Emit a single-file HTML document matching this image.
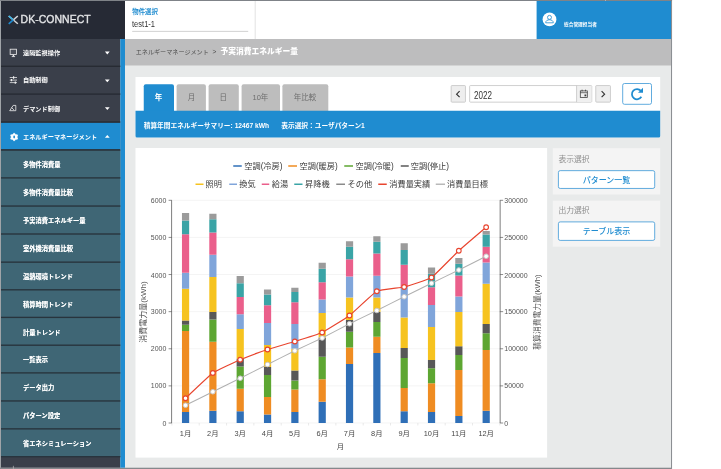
<!DOCTYPE html>
<html lang="ja"><head><meta charset="utf-8"><title>DK-CONNECT</title>
<style>
*{box-sizing:border-box;margin:0;padding:0}
html,body{width:721px;height:469px;overflow:hidden;background:#fff}
body{font-family:"Liberation Sans", "Noto Sans CJK JP", sans-serif;position:relative}
#bg{position:absolute;left:0;top:0}
#app{position:absolute;left:0;top:0;width:721px;height:469px;will-change:transform}
.t{position:absolute;display:block;white-space:nowrap;font-weight:normal}
</style></head><body>
<svg id="bg" width="721" height="469" viewBox="0 0 721 469">
<rect x="0.00" y="0.00" width="672.05" height="469.00" fill="#8c8f93" />
<rect x="0.00" y="0.00" width="672.05" height="1.05" fill="#7f8388" />
<rect x="0.00" y="1.00" width="1.10" height="468.00" fill="#a0a4a8" />
<rect x="0.00" y="467.70" width="671.20" height="1.30" fill="#85888c" />
<rect x="605.30" y="0.00" width="0.60" height="0.90" fill="#d8d8d8" />
<rect x="1.00" y="1.00" width="670.00" height="466.70" fill="#e8eaea" />
<rect x="1.00" y="1.00" width="124.00" height="38.00" fill="#262a35" />
<rect x="1.00" y="39.00" width="119.30" height="428.70" fill="#3a3f4a" />
<rect x="120.30" y="39.00" width="4.70" height="428.70" fill="#1f8cd0" />
<rect x="1.00" y="122.60" width="119.30" height="26.78" fill="#1f8cd0" />
<rect x="1.00" y="149.98" width="119.30" height="306.72" fill="#3f6675" />
<rect x="1.00" y="65.62" width="119.30" height="1.36" fill="#272b33" />
<rect x="1.00" y="93.42" width="119.30" height="1.36" fill="#272b33" />
<rect x="1.00" y="121.32" width="119.30" height="1.36" fill="#272b33" />
<rect x="1.00" y="149.30" width="119.30" height="1.36" fill="#272b33" />
<rect x="1.00" y="177.22" width="119.30" height="1.36" fill="#28343d" />
<rect x="1.00" y="205.37" width="119.30" height="1.36" fill="#28343d" />
<rect x="1.00" y="233.32" width="119.30" height="1.36" fill="#28343d" />
<rect x="1.00" y="261.47" width="119.30" height="1.36" fill="#28343d" />
<rect x="1.00" y="289.12" width="119.30" height="1.36" fill="#28343d" />
<rect x="1.00" y="316.72" width="119.30" height="1.36" fill="#28343d" />
<rect x="1.00" y="344.52" width="119.30" height="1.36" fill="#28343d" />
<rect x="1.00" y="372.22" width="119.30" height="1.36" fill="#28343d" />
<rect x="1.00" y="400.27" width="119.30" height="1.36" fill="#28343d" />
<rect x="1.00" y="428.17" width="119.30" height="1.36" fill="#28343d" />
<rect x="1.00" y="456.02" width="119.30" height="1.36" fill="#28343d" />
<path d="M104.90 51.60H109.70L107.30 54.40Z" fill="#fff"/>
<path d="M104.90 79.40H109.70L107.30 82.20Z" fill="#fff"/>
<path d="M104.90 107.25H109.70L107.30 110.05Z" fill="#fff"/>
<path d="M104.90 137.69H109.70L107.30 134.89Z" fill="#fff"/>
<rect x="10.15" y="49.2" width="6.45" height="5.3" fill="#4a4e58" stroke="#f0f0f0" stroke-width="0.8"/><path d="M13.4 54.6L12 56.6H14.8Z" fill="#f0f0f0"/><path d="M11.7 56.6H15.1" stroke="#f0f0f0" stroke-width="0.7"/>
<path d="M9.75 77.5H17M9.75 80.1H17M9.75 82.6H17" stroke="#f0f0f0" stroke-width="0.75"/><path d="M13.6 76.3V78.7M11.5 78.9V81.3M15.3 81.4V83.8" stroke="#f0f0f0" stroke-width="1.2"/>
<path d="M9.7 110.7L13.2 105.4H15.8V110.7Z" fill="none" stroke="#f0f0f0" stroke-width="0.8"/><path d="M11.6 107.6L13.9 109.9" stroke="#f0f0f0" stroke-width="0.8"/>
<g transform="translate(14.15 137.0)"><polygon points="0.00,-4.10 -1.45,-2.51 -3.55,-2.05 -2.90,-0.00 -3.55,2.05 -1.45,2.51 -0.00,4.10 1.45,2.51 3.55,2.05 2.90,0.00 3.55,-2.05 1.45,-2.51" fill="#fff" stroke="#fff" stroke-width="0.6" stroke-linejoin="round"/><ellipse rx="0.9" ry="1.4" fill="#1e8ad0"/></g>
<g transform="translate(9.8 465.8)"><path d="M3.6 0V3" stroke="#c8c8c8" stroke-width="0.6"/></g>
<g transform="translate(8.2 15.4)"><path d="M0.5 0.6L9.6 8.4" stroke="#d4d6d9" stroke-width="1.5"/><path d="M9.6 0.6L5.4 4.2" stroke="#d4d6d9" stroke-width="1.5"/><path d="M0.5 0.6L4.7 4.2" stroke="#39b6ea" stroke-width="1.6"/><path d="M0.5 8.4L5.1 4.5" stroke="#1e8ad0" stroke-width="1.6"/></g>
<rect x="125.00" y="1.00" width="546.00" height="38.00" fill="#fff" />
<line x1="255.20" y1="1.00" x2="255.20" y2="39.00" stroke="#dcdcdc" stroke-width="0.8" />
<rect x="536.60" y="1.00" width="134.40" height="38.00" fill="#1f8cd0" />
<rect x="132.20" y="30.90" width="116.00" height="0.80" fill="#c6c6c6" />
<g transform="translate(542.6 12.5)"><circle cx="6.9" cy="6.9" r="6.9" fill="#fff"/><circle cx="6.9" cy="4.9" r="2" fill="none" stroke="#1f8cd0" stroke-width="0.8"/><path d="M3.1 10.3C3.1 8.1 4.9 7.3 6.9 7.3C8.9 7.3 10.7 8.1 10.7 10.3Z" fill="none" stroke="#1f8cd0" stroke-width="0.8"/></g>
<rect x="125.00" y="39.00" width="546.00" height="26.50" fill="#bdbdbe" />
<path d="M135.5 77H660.2V136.1a1.5 1.5 0 0 1 -1.5 1.5H137a1.5 1.5 0 0 1 -1.5 -1.5Z" fill="#fff"/>
<path d="M143.75 110.9V86.3a2 2 0 0 1 2 -2H172a2 2 0 0 1 2 2V110.9Z" fill="#1f8cd0"/>
<path d="M176.6 110.9V86.3a2 2 0 0 1 2 -2H203.9a2 2 0 0 1 2 2V110.9Z" fill="#bdbdbd"/>
<path d="M208.6 110.9V86.3a2 2 0 0 1 2 -2H236.8a2 2 0 0 1 2 2V110.9Z" fill="#bdbdbd"/>
<path d="M241.6 110.9V86.3a2 2 0 0 1 2 -2H278a2 2 0 0 1 2 2V110.9Z" fill="#bdbdbd"/>
<path d="M282.4 110.9V86.3a2 2 0 0 1 2 -2H326.3a2 2 0 0 1 2 2V110.9Z" fill="#bdbdbd"/>
<path d="M135.5 110.8H660.2V136.1a1.5 1.5 0 0 1 -1.5 1.5H137a1.5 1.5 0 0 1 -1.5 -1.5Z" fill="#1f8cd0"/>
<rect x="451.15000000000003" y="85.55" width="14.30" height="16.6" rx="0.8" fill="#eee" stroke="#c0c0c0" stroke-width="0.75"/>
<path d="M459.6 91.2L456.6 94.2L459.6 97.2" fill="none" stroke="#333" stroke-width="1.15"/>
<rect x="469.65000000000003" y="85.55" width="122.10" height="16.6" rx="0.8" fill="#fff" stroke="#c0c0c0" stroke-width="0.75"/>
<path d="M576.6 85.9H591.4V101.8H576.6Z" fill="#f0f0f0"/>
<line x1="576.60" y1="85.60" x2="576.60" y2="102.10" stroke="#c0c0c0" stroke-width="0.75" />
<g transform="translate(579.6 89.4)"><rect x="0.7" y="1.5" width="7" height="6.6" fill="none" stroke="#3a3a3a" stroke-width="0.75"/><path d="M0.7 3.3H7.7" stroke="#3a3a3a" stroke-width="0.7"/><path d="M2.5 0.3V1.9M5.9 0.3V1.9" stroke="#3a3a3a" stroke-width="0.8"/><rect x="4.9" y="5.1" width="1.8" height="1.8" fill="#3a3a3a"/></g>
<rect x="595.75" y="85.55" width="14.70" height="16.6" rx="0.8" fill="#eee" stroke="#c0c0c0" stroke-width="0.75"/>
<path d="M601.6 91.2L604.6 94.2L601.6 97.2" fill="none" stroke="#333" stroke-width="1.15"/>
<rect x="622.7" y="83.5" width="28.8" height="20.8" rx="1.8" fill="#fff" stroke="#3a97d6" stroke-width="0.8"/>
<path d="M640.9 90.8A5.1 5.1 0 1 0 641.4 96.8" fill="none" stroke="#1f8cd0" stroke-width="1.75"/><path d="M643 87.7V92.7H638Z" fill="#1f8cd0"/>
<rect x="135.50" y="148.00" width="411.60" height="309.60" fill="#fff" />
<line x1="171.90" y1="423.00" x2="499.85" y2="423.00" stroke="#ececec" stroke-width="0.6" />
<line x1="171.90" y1="385.88" x2="499.85" y2="385.88" stroke="#ececec" stroke-width="0.6" />
<line x1="171.90" y1="348.77" x2="499.85" y2="348.77" stroke="#ececec" stroke-width="0.6" />
<line x1="171.90" y1="311.65" x2="499.85" y2="311.65" stroke="#ececec" stroke-width="0.6" />
<line x1="171.90" y1="274.53" x2="499.85" y2="274.53" stroke="#ececec" stroke-width="0.6" />
<line x1="171.90" y1="237.42" x2="499.85" y2="237.42" stroke="#ececec" stroke-width="0.6" />
<line x1="171.90" y1="200.30" x2="499.85" y2="200.30" stroke="#ececec" stroke-width="0.6" />
<line x1="171.90" y1="423.00" x2="171.90" y2="425.50" stroke="#dcdcdc" stroke-width="0.6" />
<line x1="199.23" y1="423.00" x2="199.23" y2="425.50" stroke="#dcdcdc" stroke-width="0.6" />
<line x1="226.56" y1="423.00" x2="226.56" y2="425.50" stroke="#dcdcdc" stroke-width="0.6" />
<line x1="253.89" y1="423.00" x2="253.89" y2="425.50" stroke="#dcdcdc" stroke-width="0.6" />
<line x1="281.22" y1="423.00" x2="281.22" y2="425.50" stroke="#dcdcdc" stroke-width="0.6" />
<line x1="308.55" y1="423.00" x2="308.55" y2="425.50" stroke="#dcdcdc" stroke-width="0.6" />
<line x1="335.88" y1="423.00" x2="335.88" y2="425.50" stroke="#dcdcdc" stroke-width="0.6" />
<line x1="363.20" y1="423.00" x2="363.20" y2="425.50" stroke="#dcdcdc" stroke-width="0.6" />
<line x1="390.53" y1="423.00" x2="390.53" y2="425.50" stroke="#dcdcdc" stroke-width="0.6" />
<line x1="417.86" y1="423.00" x2="417.86" y2="425.50" stroke="#dcdcdc" stroke-width="0.6" />
<line x1="445.19" y1="423.00" x2="445.19" y2="425.50" stroke="#dcdcdc" stroke-width="0.6" />
<line x1="472.52" y1="423.00" x2="472.52" y2="425.50" stroke="#dcdcdc" stroke-width="0.6" />
<line x1="499.85" y1="423.00" x2="499.85" y2="425.50" stroke="#dcdcdc" stroke-width="0.6" />
<rect x="181.96" y="412.00" width="7.20" height="11.00" fill="#2f6fb7" />
<rect x="181.96" y="331.00" width="7.20" height="81.00" fill="#ef8c22" />
<rect x="181.96" y="324.75" width="7.20" height="6.25" fill="#5da632" />
<rect x="181.96" y="320.50" width="7.20" height="4.25" fill="#585858" />
<rect x="181.96" y="288.75" width="7.20" height="31.75" fill="#f6c31f" />
<rect x="181.96" y="272.75" width="7.20" height="16.00" fill="#80a5da" />
<rect x="181.96" y="234.25" width="7.20" height="38.50" fill="#ea5f8b" />
<rect x="181.96" y="220.50" width="7.20" height="13.75" fill="#3aa4a6" />
<rect x="181.96" y="213.00" width="7.20" height="7.50" fill="#9b9b9b" />
<rect x="209.29" y="410.75" width="7.20" height="12.25" fill="#2f6fb7" />
<rect x="209.29" y="341.75" width="7.20" height="69.00" fill="#ef8c22" />
<rect x="209.29" y="319.50" width="7.20" height="22.25" fill="#5da632" />
<rect x="209.29" y="312.00" width="7.20" height="7.50" fill="#585858" />
<rect x="209.29" y="277.00" width="7.20" height="35.00" fill="#f6c31f" />
<rect x="209.29" y="254.75" width="7.20" height="22.25" fill="#80a5da" />
<rect x="209.29" y="232.50" width="7.20" height="22.25" fill="#ea5f8b" />
<rect x="209.29" y="219.25" width="7.20" height="13.25" fill="#3aa4a6" />
<rect x="209.29" y="213.75" width="7.20" height="5.50" fill="#9b9b9b" />
<rect x="236.62" y="411.25" width="7.20" height="11.75" fill="#2f6fb7" />
<rect x="236.62" y="388.75" width="7.20" height="22.50" fill="#ef8c22" />
<rect x="236.62" y="366.50" width="7.20" height="22.25" fill="#5da632" />
<rect x="236.62" y="358.75" width="7.20" height="7.75" fill="#585858" />
<rect x="236.62" y="329.00" width="7.20" height="29.75" fill="#f6c31f" />
<rect x="236.62" y="314.25" width="7.20" height="14.75" fill="#80a5da" />
<rect x="236.62" y="297.00" width="7.20" height="17.25" fill="#ea5f8b" />
<rect x="236.62" y="283.25" width="7.20" height="13.75" fill="#3aa4a6" />
<rect x="236.62" y="276.00" width="7.20" height="7.25" fill="#9b9b9b" />
<rect x="263.95" y="414.50" width="7.20" height="8.50" fill="#2f6fb7" />
<rect x="263.95" y="397.00" width="7.20" height="17.50" fill="#ef8c22" />
<rect x="263.95" y="375.00" width="7.20" height="22.00" fill="#5da632" />
<rect x="263.95" y="367.00" width="7.20" height="8.00" fill="#585858" />
<rect x="263.95" y="345.00" width="7.20" height="22.00" fill="#f6c31f" />
<rect x="263.95" y="323.00" width="7.20" height="22.00" fill="#80a5da" />
<rect x="263.95" y="305.25" width="7.20" height="17.75" fill="#ea5f8b" />
<rect x="263.95" y="294.50" width="7.20" height="10.75" fill="#3aa4a6" />
<rect x="263.95" y="289.50" width="7.20" height="5.00" fill="#9b9b9b" />
<rect x="291.28" y="412.00" width="7.20" height="11.00" fill="#2f6fb7" />
<rect x="291.28" y="389.50" width="7.20" height="22.50" fill="#ef8c22" />
<rect x="291.28" y="380.50" width="7.20" height="9.00" fill="#5da632" />
<rect x="291.28" y="370.50" width="7.20" height="10.00" fill="#585858" />
<rect x="291.28" y="348.75" width="7.20" height="21.75" fill="#f6c31f" />
<rect x="291.28" y="324.00" width="7.20" height="24.75" fill="#80a5da" />
<rect x="291.28" y="302.25" width="7.20" height="21.75" fill="#ea5f8b" />
<rect x="291.28" y="292.00" width="7.20" height="10.25" fill="#3aa4a6" />
<rect x="291.28" y="287.75" width="7.20" height="4.25" fill="#9b9b9b" />
<rect x="318.61" y="401.75" width="7.20" height="21.25" fill="#2f6fb7" />
<rect x="318.61" y="379.25" width="7.20" height="22.50" fill="#ef8c22" />
<rect x="318.61" y="356.75" width="7.20" height="22.50" fill="#5da632" />
<rect x="318.61" y="337.50" width="7.20" height="19.25" fill="#585858" />
<rect x="318.61" y="313.00" width="7.20" height="24.50" fill="#f6c31f" />
<rect x="318.61" y="299.50" width="7.20" height="13.50" fill="#80a5da" />
<rect x="318.61" y="282.25" width="7.20" height="17.25" fill="#ea5f8b" />
<rect x="318.61" y="268.75" width="7.20" height="13.50" fill="#3aa4a6" />
<rect x="318.61" y="262.75" width="7.20" height="6.00" fill="#9b9b9b" />
<rect x="345.94" y="364.00" width="7.20" height="59.00" fill="#2f6fb7" />
<rect x="345.94" y="347.50" width="7.20" height="16.50" fill="#ef8c22" />
<rect x="345.94" y="331.75" width="7.20" height="15.75" fill="#5da632" />
<rect x="345.94" y="320.00" width="7.20" height="11.75" fill="#585858" />
<rect x="345.94" y="297.50" width="7.20" height="22.50" fill="#f6c31f" />
<rect x="345.94" y="276.50" width="7.20" height="21.00" fill="#80a5da" />
<rect x="345.94" y="259.25" width="7.20" height="17.25" fill="#ea5f8b" />
<rect x="345.94" y="246.75" width="7.20" height="12.50" fill="#3aa4a6" />
<rect x="345.94" y="241.25" width="7.20" height="5.50" fill="#9b9b9b" />
<rect x="373.27" y="353.00" width="7.20" height="70.00" fill="#2f6fb7" />
<rect x="373.27" y="336.75" width="7.20" height="16.25" fill="#ef8c22" />
<rect x="373.27" y="322.00" width="7.20" height="14.75" fill="#5da632" />
<rect x="373.27" y="312.00" width="7.20" height="10.00" fill="#585858" />
<rect x="373.27" y="297.50" width="7.20" height="14.50" fill="#f6c31f" />
<rect x="373.27" y="275.75" width="7.20" height="21.75" fill="#80a5da" />
<rect x="373.27" y="253.50" width="7.20" height="22.25" fill="#ea5f8b" />
<rect x="373.27" y="241.75" width="7.20" height="11.75" fill="#3aa4a6" />
<rect x="373.27" y="236.25" width="7.20" height="5.50" fill="#9b9b9b" />
<rect x="400.60" y="411.25" width="7.20" height="11.75" fill="#2f6fb7" />
<rect x="400.60" y="388.00" width="7.20" height="23.25" fill="#ef8c22" />
<rect x="400.60" y="358.00" width="7.20" height="30.00" fill="#5da632" />
<rect x="400.60" y="348.00" width="7.20" height="10.00" fill="#585858" />
<rect x="400.60" y="317.50" width="7.20" height="30.50" fill="#f6c31f" />
<rect x="400.60" y="287.00" width="7.20" height="30.50" fill="#80a5da" />
<rect x="400.60" y="264.75" width="7.20" height="22.25" fill="#ea5f8b" />
<rect x="400.60" y="250.00" width="7.20" height="14.75" fill="#3aa4a6" />
<rect x="400.60" y="243.25" width="7.20" height="6.75" fill="#9b9b9b" />
<rect x="427.93" y="412.00" width="7.20" height="11.00" fill="#2f6fb7" />
<rect x="427.93" y="383.25" width="7.20" height="28.75" fill="#ef8c22" />
<rect x="427.93" y="368.25" width="7.20" height="15.00" fill="#5da632" />
<rect x="427.93" y="360.00" width="7.20" height="8.25" fill="#585858" />
<rect x="427.93" y="327.00" width="7.20" height="33.00" fill="#f6c31f" />
<rect x="427.93" y="305.00" width="7.20" height="22.00" fill="#80a5da" />
<rect x="427.93" y="287.25" width="7.20" height="17.75" fill="#ea5f8b" />
<rect x="427.93" y="273.75" width="7.20" height="13.50" fill="#3aa4a6" />
<rect x="427.93" y="267.50" width="7.20" height="6.25" fill="#9b9b9b" />
<rect x="455.26" y="416.00" width="7.20" height="7.00" fill="#2f6fb7" />
<rect x="455.26" y="370.00" width="7.20" height="46.00" fill="#ef8c22" />
<rect x="455.26" y="355.00" width="7.20" height="15.00" fill="#5da632" />
<rect x="455.26" y="346.25" width="7.20" height="8.75" fill="#585858" />
<rect x="455.26" y="312.00" width="7.20" height="34.25" fill="#f6c31f" />
<rect x="455.26" y="296.50" width="7.20" height="15.50" fill="#80a5da" />
<rect x="455.26" y="275.50" width="7.20" height="21.00" fill="#ea5f8b" />
<rect x="455.26" y="263.75" width="7.20" height="11.75" fill="#3aa4a6" />
<rect x="455.26" y="258.00" width="7.20" height="5.75" fill="#9b9b9b" />
<rect x="482.59" y="410.75" width="7.20" height="12.25" fill="#2f6fb7" />
<rect x="482.59" y="350.00" width="7.20" height="60.75" fill="#ef8c22" />
<rect x="482.59" y="333.25" width="7.20" height="16.75" fill="#5da632" />
<rect x="482.59" y="324.00" width="7.20" height="9.25" fill="#585858" />
<rect x="482.59" y="283.75" width="7.20" height="40.25" fill="#f6c31f" />
<rect x="482.59" y="262.50" width="7.20" height="21.25" fill="#80a5da" />
<rect x="482.59" y="246.75" width="7.20" height="15.75" fill="#ea5f8b" />
<rect x="482.59" y="234.50" width="7.20" height="12.25" fill="#3aa4a6" />
<rect x="482.59" y="231.00" width="7.20" height="3.50" fill="#9b9b9b" />
<line x1="171.60" y1="200.30" x2="171.60" y2="423.00" stroke="#5c5c5c" stroke-width="0.8" />
<line x1="500.15" y1="200.30" x2="500.15" y2="423.00" stroke="#5c5c5c" stroke-width="0.8" />
<line x1="168.60" y1="423.00" x2="171.90" y2="423.00" stroke="#5c5c5c" stroke-width="0.7" />
<line x1="499.85" y1="423.00" x2="503.15" y2="423.00" stroke="#5c5c5c" stroke-width="0.7" />
<line x1="168.60" y1="385.88" x2="171.90" y2="385.88" stroke="#5c5c5c" stroke-width="0.7" />
<line x1="499.85" y1="385.88" x2="503.15" y2="385.88" stroke="#5c5c5c" stroke-width="0.7" />
<line x1="168.60" y1="348.77" x2="171.90" y2="348.77" stroke="#5c5c5c" stroke-width="0.7" />
<line x1="499.85" y1="348.77" x2="503.15" y2="348.77" stroke="#5c5c5c" stroke-width="0.7" />
<line x1="168.60" y1="311.65" x2="171.90" y2="311.65" stroke="#5c5c5c" stroke-width="0.7" />
<line x1="499.85" y1="311.65" x2="503.15" y2="311.65" stroke="#5c5c5c" stroke-width="0.7" />
<line x1="168.60" y1="274.53" x2="171.90" y2="274.53" stroke="#5c5c5c" stroke-width="0.7" />
<line x1="499.85" y1="274.53" x2="503.15" y2="274.53" stroke="#5c5c5c" stroke-width="0.7" />
<line x1="168.60" y1="237.42" x2="171.90" y2="237.42" stroke="#5c5c5c" stroke-width="0.7" />
<line x1="499.85" y1="237.42" x2="503.15" y2="237.42" stroke="#5c5c5c" stroke-width="0.7" />
<line x1="168.60" y1="200.30" x2="171.90" y2="200.30" stroke="#5c5c5c" stroke-width="0.7" />
<line x1="499.85" y1="200.30" x2="503.15" y2="200.30" stroke="#5c5c5c" stroke-width="0.7" />
<path d="M185.51 405.25C187.15 404.44 209.56 393.37 212.84 391.75C216.12 390.13 236.89 379.88 240.17 378.25C243.45 376.62 264.22 366.15 267.50 364.50C270.78 362.85 291.55 352.34 294.83 350.75C298.11 349.16 318.88 339.62 322.16 338.00C325.44 336.38 346.21 325.40 349.49 323.75C352.77 322.10 373.54 312.12 376.82 310.50C380.10 308.88 400.87 298.38 404.15 296.75C407.43 295.12 428.20 284.86 431.48 283.25C434.76 281.64 455.53 271.62 458.81 270.00C462.09 268.38 484.50 257.07 486.14 256.25" fill="none" stroke="#b0b0b0" stroke-width="1.05"/>
<circle cx="185.51" cy="405.25" r="2.3" fill="#fff" stroke="#c8c8c8" stroke-width="1"/>
<circle cx="212.84" cy="391.75" r="2.3" fill="#fff" stroke="#c8c8c8" stroke-width="1"/>
<circle cx="240.17" cy="378.25" r="2.3" fill="#fff" stroke="#c8c8c8" stroke-width="1"/>
<circle cx="267.50" cy="364.50" r="2.3" fill="#fff" stroke="#c8c8c8" stroke-width="1"/>
<circle cx="294.83" cy="350.75" r="2.3" fill="#fff" stroke="#c8c8c8" stroke-width="1"/>
<circle cx="322.16" cy="338.00" r="2.3" fill="#fff" stroke="#c8c8c8" stroke-width="1"/>
<circle cx="349.49" cy="323.75" r="2.3" fill="#fff" stroke="#c8c8c8" stroke-width="1"/>
<circle cx="376.82" cy="310.50" r="2.3" fill="#fff" stroke="#c8c8c8" stroke-width="1"/>
<circle cx="404.15" cy="296.75" r="2.3" fill="#fff" stroke="#c8c8c8" stroke-width="1"/>
<circle cx="431.48" cy="283.25" r="2.3" fill="#fff" stroke="#c8c8c8" stroke-width="1"/>
<circle cx="458.81" cy="270.00" r="2.3" fill="#fff" stroke="#c8c8c8" stroke-width="1"/>
<circle cx="486.14" cy="256.25" r="2.3" fill="#fff" stroke="#c8c8c8" stroke-width="1"/>
<path d="M185.51 398.25C187.15 396.74 209.56 375.31 212.84 373.00C216.12 370.69 236.89 361.16 240.17 359.75C243.45 358.34 264.22 350.60 267.50 349.50C270.78 348.40 291.55 342.52 294.83 341.50C298.11 340.48 318.88 334.06 322.16 332.50C325.44 330.94 346.21 317.98 349.49 315.50C352.77 313.02 373.54 292.96 376.82 291.25C380.10 289.54 400.87 287.82 404.15 287.00C407.43 286.18 428.20 279.68 431.48 277.50C434.76 275.32 455.53 253.76 458.81 250.75C462.09 247.74 484.50 228.66 486.14 227.25" fill="none" stroke="#e8452f" stroke-width="1.2"/>
<circle cx="185.51" cy="398.25" r="2.35" fill="#fff" stroke="#e8452f" stroke-width="1.1"/>
<circle cx="212.84" cy="373.00" r="2.35" fill="#fff" stroke="#e8452f" stroke-width="1.1"/>
<circle cx="240.17" cy="359.75" r="2.35" fill="#fff" stroke="#e8452f" stroke-width="1.1"/>
<circle cx="267.50" cy="349.50" r="2.35" fill="#fff" stroke="#e8452f" stroke-width="1.1"/>
<circle cx="294.83" cy="341.50" r="2.35" fill="#fff" stroke="#e8452f" stroke-width="1.1"/>
<circle cx="322.16" cy="332.50" r="2.35" fill="#fff" stroke="#e8452f" stroke-width="1.1"/>
<circle cx="349.49" cy="315.50" r="2.35" fill="#fff" stroke="#e8452f" stroke-width="1.1"/>
<circle cx="376.82" cy="291.25" r="2.35" fill="#fff" stroke="#e8452f" stroke-width="1.1"/>
<circle cx="404.15" cy="287.00" r="2.35" fill="#fff" stroke="#e8452f" stroke-width="1.1"/>
<circle cx="431.48" cy="277.50" r="2.35" fill="#fff" stroke="#e8452f" stroke-width="1.1"/>
<circle cx="458.81" cy="250.75" r="2.35" fill="#fff" stroke="#e8452f" stroke-width="1.1"/>
<circle cx="486.14" cy="227.25" r="2.35" fill="#fff" stroke="#e8452f" stroke-width="1.1"/>
<line x1="233.25" y1="166.00" x2="241.75" y2="166.00" stroke="#2f6fb7" stroke-width="1.5" />
<line x1="288.25" y1="166.00" x2="297.00" y2="166.00" stroke="#ef8c22" stroke-width="1.5" />
<line x1="344.25" y1="166.00" x2="353.00" y2="166.00" stroke="#5da632" stroke-width="1.5" />
<line x1="400.75" y1="166.00" x2="408.75" y2="166.00" stroke="#585858" stroke-width="1.5" />
<line x1="195.50" y1="184.25" x2="203.50" y2="184.25" stroke="#f6c31f" stroke-width="1.5" />
<line x1="229.25" y1="184.25" x2="237.00" y2="184.25" stroke="#80a5da" stroke-width="1.5" />
<line x1="261.75" y1="184.25" x2="269.25" y2="184.25" stroke="#ea5f8b" stroke-width="1.5" />
<line x1="294.25" y1="184.25" x2="302.50" y2="184.25" stroke="#3aa4a6" stroke-width="1.5" />
<line x1="336.25" y1="184.25" x2="345.00" y2="184.25" stroke="#8a8a8a" stroke-width="1.5" />
<line x1="378.25" y1="184.25" x2="386.75" y2="184.25" stroke="#e8452f" stroke-width="1.5" />
<line x1="435.75" y1="184.25" x2="445.00" y2="184.25" stroke="#b9b9b9" stroke-width="1.5" />
<rect x="552.80" y="148.20" width="107.40" height="46.30" fill="#f4f4f4" />
<rect x="552.80" y="200.70" width="107.40" height="46.00" fill="#f4f4f4" />
<rect x="558.4" y="170.65" width="96.3" height="17.8" rx="1.8" fill="#fff" stroke="#3a97d6" stroke-width="0.8"/>
<rect x="558.4" y="221.9" width="96.3" height="18.5" rx="1.8" fill="#fff" stroke="#3a97d6" stroke-width="0.8"/>
</svg>
<div id="app">
<div class="t nav" style="top:47.30px;font-size:6.2px;color:#fff;line-height:12px;left:23.00px;font-weight:bold;">遠隔監視操作</div>
<div class="t nav" style="top:74.10px;font-size:6.2px;color:#fff;line-height:12px;left:23.00px;font-weight:bold;">自動制御</div>
<div class="t nav" style="top:102.95px;font-size:6.2px;color:#fff;line-height:12px;left:23.00px;font-weight:bold;">デマンド制御</div>
<div class="t nav" style="top:130.89px;font-size:6.2px;color:#fff;line-height:12px;left:23.00px;font-weight:bold;">エネルギーマネージメント</div>
<div class="t nav sub" style="top:159.24px;font-size:6.25px;color:#fff;line-height:12px;left:23.00px;font-weight:bold;text-shadow:0 0 0.35px rgba(255,255,255,0.8);">多物件消費量</div>
<div class="t nav sub" style="top:187.28px;font-size:6.25px;color:#fff;line-height:12px;left:23.00px;font-weight:bold;text-shadow:0 0 0.35px rgba(255,255,255,0.8);">多物件消費量比較</div>
<div class="t nav sub" style="top:215.33px;font-size:6.25px;color:#fff;line-height:12px;left:23.00px;font-weight:bold;text-shadow:0 0 0.35px rgba(255,255,255,0.8);">予実消費エネルギー量</div>
<div class="t nav sub" style="top:243.38px;font-size:6.25px;color:#fff;line-height:12px;left:23.00px;font-weight:bold;text-shadow:0 0 0.35px rgba(255,255,255,0.8);">室外機消費量比較</div>
<div class="t nav sub" style="top:271.28px;font-size:6.25px;color:#fff;line-height:12px;left:23.00px;font-weight:bold;text-shadow:0 0 0.35px rgba(255,255,255,0.8);">温熱環境トレンド</div>
<div class="t nav sub" style="top:298.90px;font-size:6.25px;color:#fff;line-height:12px;left:23.00px;font-weight:bold;text-shadow:0 0 0.35px rgba(255,255,255,0.8);">積算時間トレンド</div>
<div class="t nav sub" style="top:326.60px;font-size:6.25px;color:#fff;line-height:12px;left:23.00px;font-weight:bold;text-shadow:0 0 0.35px rgba(255,255,255,0.8);">計量トレンド</div>
<div class="t nav sub" style="top:354.35px;font-size:6.25px;color:#fff;line-height:12px;left:23.00px;font-weight:bold;text-shadow:0 0 0.35px rgba(255,255,255,0.8);">一覧表示</div>
<div class="t nav sub" style="top:382.22px;font-size:6.25px;color:#fff;line-height:12px;left:23.00px;font-weight:bold;text-shadow:0 0 0.35px rgba(255,255,255,0.8);">データ出力</div>
<div class="t nav sub" style="top:410.20px;font-size:6.25px;color:#fff;line-height:12px;left:23.00px;font-weight:bold;text-shadow:0 0 0.35px rgba(255,255,255,0.8);">パターン設定</div>
<div class="t nav sub" style="top:438.07px;font-size:6.25px;color:#fff;line-height:12px;left:23.00px;font-weight:bold;text-shadow:0 0 0.35px rgba(255,255,255,0.8);">省エネシミュレーション</div>
<div class="t " style="top:14.40px;font-size:10.45px;color:#e4e5e7;line-height:12px;left:20.60px;letter-spacing:0.06px;-webkit-text-stroke:0.35px #e4e5e7;">DK-CONNECT</div>
<span class="t " style="top:5.90px;font-size:6.45px;color:#1f8cd0;line-height:12px;left:132.20px;font-weight:bold;">物件選択</span>
<span class="t " style="top:18.40px;font-size:9.3px;color:#333;line-height:12px;left:132.30px;transform:scaleX(0.81);transform-origin:0 50%;">test1-1</span>
<span class="t " style="top:19.00px;font-size:4.7px;color:#fff;line-height:12px;left:564.00px;font-weight:bold;">総合管理担当者</span>
<span class="t " style="top:46.00px;font-size:6.1px;color:#4a4a4a;line-height:12px;left:135.75px;">エネルギーマネージメント</span>
<span class="t " style="top:46.00px;font-size:6.6px;color:#4a4a4a;line-height:12px;left:212.60px;">&gt;</span>
<h1 class="t " style="top:46.20px;font-size:7.75px;color:#fff;line-height:12px;left:220.50px;font-weight:bold;font-weight:900;">予実消費エネルギー量</h1>
<div class="t tab" style="top:91.50px;font-size:7.5px;color:#fff;line-height:12px;left:58.47px;width:200px;text-align:center;font-weight:bold;">年</div>
<div class="t tab" style="top:91.50px;font-size:7.5px;color:#6e6e6e;line-height:12px;left:91.55px;width:200px;text-align:center;">月</div>
<div class="t tab" style="top:91.50px;font-size:7.5px;color:#6e6e6e;line-height:12px;left:123.30px;width:200px;text-align:center;">日</div>
<div class="t tab" style="top:91.50px;font-size:7.5px;color:#6e6e6e;line-height:12px;left:160.40px;width:200px;text-align:center;">10年</div>
<div class="t tab" style="top:91.50px;font-size:7.5px;color:#6e6e6e;line-height:12px;left:204.95px;width:200px;text-align:center;">年比較</div>
<span class="t " style="top:119.90px;font-size:6.7px;color:#fff;line-height:12px;left:143.75px;font-weight:bold;">積算年間エネルギーサマリー: 12467 kWh</span>
<span class="t " style="top:119.90px;font-size:6.7px;color:#fff;line-height:12px;left:281.30px;font-weight:bold;">表示選択：ユーザパターン1</span>
<span class="t " style="top:89.60px;font-size:10.2px;color:#333;line-height:12px;left:473.80px;transform:scaleX(0.79);transform-origin:0 50%;">2022</span>
<span class="t " style="top:417.70px;font-size:7px;color:#555;line-height:12px;left:-33.70px;width:200px;text-align:right;">0</span>
<span class="t " style="top:417.70px;font-size:7px;color:#555;line-height:12px;left:504.25px;">0</span>
<span class="t " style="top:380.18px;font-size:7px;color:#555;line-height:12px;left:-33.70px;width:200px;text-align:right;">1000</span>
<span class="t " style="top:380.18px;font-size:7px;color:#555;line-height:12px;left:504.25px;">50000</span>
<span class="t " style="top:343.47px;font-size:7px;color:#555;line-height:12px;left:-33.70px;width:200px;text-align:right;">2000</span>
<span class="t " style="top:343.47px;font-size:7px;color:#555;line-height:12px;left:504.25px;">100000</span>
<span class="t " style="top:306.35px;font-size:7px;color:#555;line-height:12px;left:-33.70px;width:200px;text-align:right;">3000</span>
<span class="t " style="top:306.35px;font-size:7px;color:#555;line-height:12px;left:504.25px;">150000</span>
<span class="t " style="top:269.53px;font-size:7px;color:#555;line-height:12px;left:-33.70px;width:200px;text-align:right;">4000</span>
<span class="t " style="top:269.53px;font-size:7px;color:#555;line-height:12px;left:504.25px;">200000</span>
<span class="t " style="top:232.12px;font-size:7px;color:#555;line-height:12px;left:-33.70px;width:200px;text-align:right;">5000</span>
<span class="t " style="top:232.12px;font-size:7px;color:#555;line-height:12px;left:504.25px;">250000</span>
<span class="t " style="top:195.00px;font-size:7px;color:#555;line-height:12px;left:-33.70px;width:200px;text-align:right;">6000</span>
<span class="t " style="top:195.00px;font-size:7px;color:#555;line-height:12px;left:504.25px;">300000</span>
<span class="t " style="top:428.00px;font-size:7.4px;color:#484848;line-height:12px;left:85.56px;width:200px;text-align:center;">1月</span>
<span class="t " style="top:428.00px;font-size:7.4px;color:#484848;line-height:12px;left:112.89px;width:200px;text-align:center;">2月</span>
<span class="t " style="top:428.00px;font-size:7.4px;color:#484848;line-height:12px;left:140.22px;width:200px;text-align:center;">3月</span>
<span class="t " style="top:428.00px;font-size:7.4px;color:#484848;line-height:12px;left:167.55px;width:200px;text-align:center;">4月</span>
<span class="t " style="top:428.00px;font-size:7.4px;color:#484848;line-height:12px;left:194.88px;width:200px;text-align:center;">5月</span>
<span class="t " style="top:428.00px;font-size:7.4px;color:#484848;line-height:12px;left:222.21px;width:200px;text-align:center;">6月</span>
<span class="t " style="top:428.00px;font-size:7.4px;color:#484848;line-height:12px;left:249.54px;width:200px;text-align:center;">7月</span>
<span class="t " style="top:428.00px;font-size:7.4px;color:#484848;line-height:12px;left:276.87px;width:200px;text-align:center;">8月</span>
<span class="t " style="top:428.00px;font-size:7.4px;color:#484848;line-height:12px;left:304.20px;width:200px;text-align:center;">9月</span>
<span class="t " style="top:428.00px;font-size:7.4px;color:#484848;line-height:12px;left:331.53px;width:200px;text-align:center;">10月</span>
<span class="t " style="top:428.00px;font-size:7.4px;color:#484848;line-height:12px;left:358.86px;width:200px;text-align:center;">11月</span>
<span class="t " style="top:428.00px;font-size:7.4px;color:#484848;line-height:12px;left:386.19px;width:200px;text-align:center;">12月</span>
<span class="t " style="top:441.20px;font-size:7.4px;color:#484848;line-height:12px;left:240.50px;width:200px;text-align:center;">月</span>
<span class="t" style="left:44px;top:306px;width:200px;text-align:center;line-height:12px;font-size:8px;color:#555;transform:rotate(-90deg)">消費電力量(kWh)</span>
<span class="t" style="left:438.1px;top:306px;width:200px;text-align:center;line-height:12px;font-size:7.8px;color:#555;transform:rotate(-90deg)">積算消費電力量(kWh)</span>
<span class="t " style="top:160.90px;font-size:8.2px;color:#3a3a3a;line-height:12px;left:244.25px;">空調(冷房)</span>
<span class="t " style="top:160.90px;font-size:8.2px;color:#3a3a3a;line-height:12px;left:299.50px;">空調(暖房)</span>
<span class="t " style="top:160.90px;font-size:8.2px;color:#3a3a3a;line-height:12px;left:355.50px;">空調(冷暖)</span>
<span class="t " style="top:160.90px;font-size:8.2px;color:#3a3a3a;line-height:12px;left:410.75px;">空調(停止)</span>
<span class="t " style="top:179.15px;font-size:8.2px;color:#3a3a3a;line-height:12px;left:205.50px;">照明</span>
<span class="t " style="top:179.15px;font-size:8.2px;color:#3a3a3a;line-height:12px;left:239.25px;">換気</span>
<span class="t " style="top:179.15px;font-size:8.2px;color:#3a3a3a;line-height:12px;left:271.75px;">給湯</span>
<span class="t " style="top:179.15px;font-size:8.2px;color:#3a3a3a;line-height:12px;left:305.00px;">昇降機</span>
<span class="t " style="top:179.15px;font-size:8.2px;color:#3a3a3a;line-height:12px;left:347.50px;">その他</span>
<span class="t " style="top:179.15px;font-size:8.2px;color:#3a3a3a;line-height:12px;left:389.25px;">消費量実績</span>
<span class="t " style="top:179.15px;font-size:8.2px;color:#3a3a3a;line-height:12px;left:447.00px;">消費量目標</span>
<span class="t " style="top:154.00px;font-size:7.8px;color:#909090;line-height:12px;left:558.40px;">表示選択</span>
<span class="t " style="top:204.50px;font-size:7.8px;color:#909090;line-height:12px;left:558.40px;">出力選択</span>
<div class="t btn" style="top:175.00px;font-size:8px;color:#1f8cd0;line-height:12px;left:506.50px;width:200px;text-align:center;font-weight:500;">パターン一覧</div>
<div class="t btn" style="top:226.10px;font-size:8px;color:#1f8cd0;line-height:12px;left:506.50px;width:200px;text-align:center;font-weight:500;">テーブル表示</div>
</div>
</body></html>
